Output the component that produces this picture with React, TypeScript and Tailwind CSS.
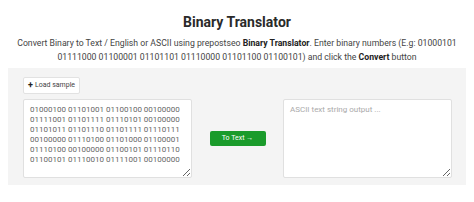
import React from "react";

const binary =
  "01000100 01101001 01100100 00100000 01111001 01101111 01110101 00100000 01101011 01101110 01101111 01110111 00100000 01110100 01101000 01100001 01110100 00100000 01100101 01110110 01100101 01110010 01111001 00100000";

export default function App() {
  return (
    <div
      className="w-[474px] h-[202px] bg-white text-[#333] overflow-hidden"
      style={{ fontFamily: "Roboto, 'Liberation Sans', sans-serif" }}
    >
      <h1 className="text-center font-bold text-[14px] leading-[16px] pt-[14px] text-[#2a2a2a]">
        Binary Translator
      </h1>
      <p className="text-center text-[8.7px] leading-[14px] mt-[6px] px-[6px] text-[#444]">
        Convert Binary to Text / English or ASCII using prepostseo{" "}
        <b className="text-[#222]">Binary Translator</b>. Enter binary numbers (E.g: 01000101 01111000
        01100001 01101101 01110000 01101100 01100101) and click the{" "}
        <b className="text-[#222]">Convert</b> button
      </p>
      <div className="mx-[8px] mt-[4px] w-[458px] h-[117px] bg-[#f4f4f4] pt-[9px] pl-[15px] pr-[14px]">
        <button className="flex items-center gap-[2px] h-[17px] px-[4px] bg-white border border-[#e2e2e2] rounded-[2px] text-[7px] text-[#444]">
          <span className="text-[9px] font-bold leading-none text-[#222]">+</span>
          <span>Load sample</span>
        </button>
        <div className="flex mt-[5px] items-stretch">
          <textarea
            readOnly
            defaultValue={binary}
            className="w-[169px] h-[79px] bg-white border border-[#e0e0e0] rounded-[2px] pt-[5px] px-[6px] text-[8px] leading-[10px] text-[#666] resize-y outline-none overflow-hidden"
            style={{ fontFamily: "Roboto, 'Liberation Sans', sans-serif" }}
          />
          <div className="flex-1 flex items-center justify-center">
            <button className="w-[56px] h-[15px] bg-[#1a9b2b] text-white text-[7px] rounded-[2px] flex items-center justify-center">
              To Text →
            </button>
          </div>
          <textarea
            readOnly
            placeholder="ASCII text string output ..."
            className="w-[169px] h-[79px] bg-white border border-[#e0e0e0] rounded-[2px] pt-[5px] px-[6px] text-[8px] leading-[10px] text-[#555] placeholder:text-[#aaa] resize-y outline-none"
            style={{ fontFamily: "Roboto, 'Liberation Sans', sans-serif" }}
          />
        </div>
      </div>
    </div>
  );
}
